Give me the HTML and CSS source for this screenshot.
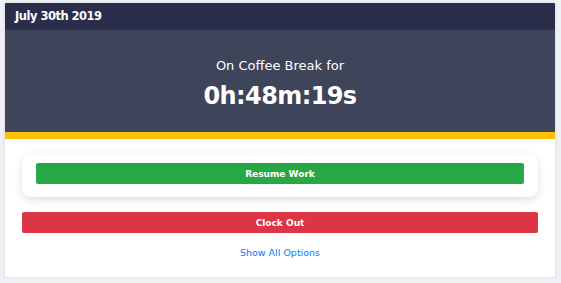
FILE: index.html
```html
<!DOCTYPE html>
<html>
<head>
<meta charset="utf-8">
<link rel="stylesheet" href="styles.css">
</head>
<body>
<div class="card">
  <div class="card-header">July 30th 2019</div>
  <div class="status">
    <div class="status-label">On Coffee Break for</div>
    <div class="status-timer">0h:48m:19s</div>
  </div>
  <div class="card-body">
    <div class="inner-card">
      <button class="btn btn-green">Resume Work</button>
    </div>
    <button class="btn btn-red">Clock Out</button>
    <a class="options-link" href="#">Show All Options</a>
  </div>
</div>
</body>
</html>
```

FILE: styles.css
```css
html, body {
  margin: 0;
  padding: 0;
}
body {
  background: #f0f1f5;
  font-family: "DejaVu Sans", "Open Sans", sans-serif;
  padding: 2px 5px 0 4px;
}
.card {
  background: #fff;
  border: 1px solid #e3e5ea;
  border-radius: 2px;
  box-shadow: 0 1px 2px rgba(0,0,0,0.08);
  overflow: hidden;
  height: 276px;
  box-sizing: border-box;
}
.card-header {
  background: #2a2e4a;
  color: #fff;
  font-weight: 700;
  font-size: 11.5px;
  height: 27px;
  line-height: 26px;
  padding-left: 10px;
  letter-spacing: -0.5px;
}
.status {
  background: #3e4459;
  border-bottom: 7px solid #ffc107;
  height: 102px;
  display: flex;
  flex-direction: column;
  align-items: center;
  color: #fff;
}
.status-label {
  font-size: 13px;
  margin-top: 28px;
  line-height: 16px;
}
.status-timer {
  font-size: 24px;
  font-weight: 700;
  line-height: 30px;
  margin-top: 7px;
  letter-spacing: -0.6px;
}
.card-body {
  padding: 14px 17px 0 17px;
  display: flex;
  flex-direction: column;
}
.inner-card {
  background: #fff;
  border-radius: 9px;
  box-shadow: 0 3px 9px rgba(0,0,0,0.13);
  padding: 10px 14px 13px 14px;
}
.btn {
  display: block;
  width: 100%;
  height: 21px;
  border: none;
  border-radius: 2px;
  color: #fff;
  font-family: "DejaVu Sans", "Open Sans", sans-serif;
  font-weight: 700;
  font-size: 9px;
  padding: 0;
}
.btn-green {
  background: #28a745;
}
.btn-red {
  background: #dc3545;
  margin-top: 15px;
}
.options-link {
  align-self: center;
  color: #007bff;
  font-size: 9.5px;
  text-decoration: none;
  margin-top: 14px;
}
```
